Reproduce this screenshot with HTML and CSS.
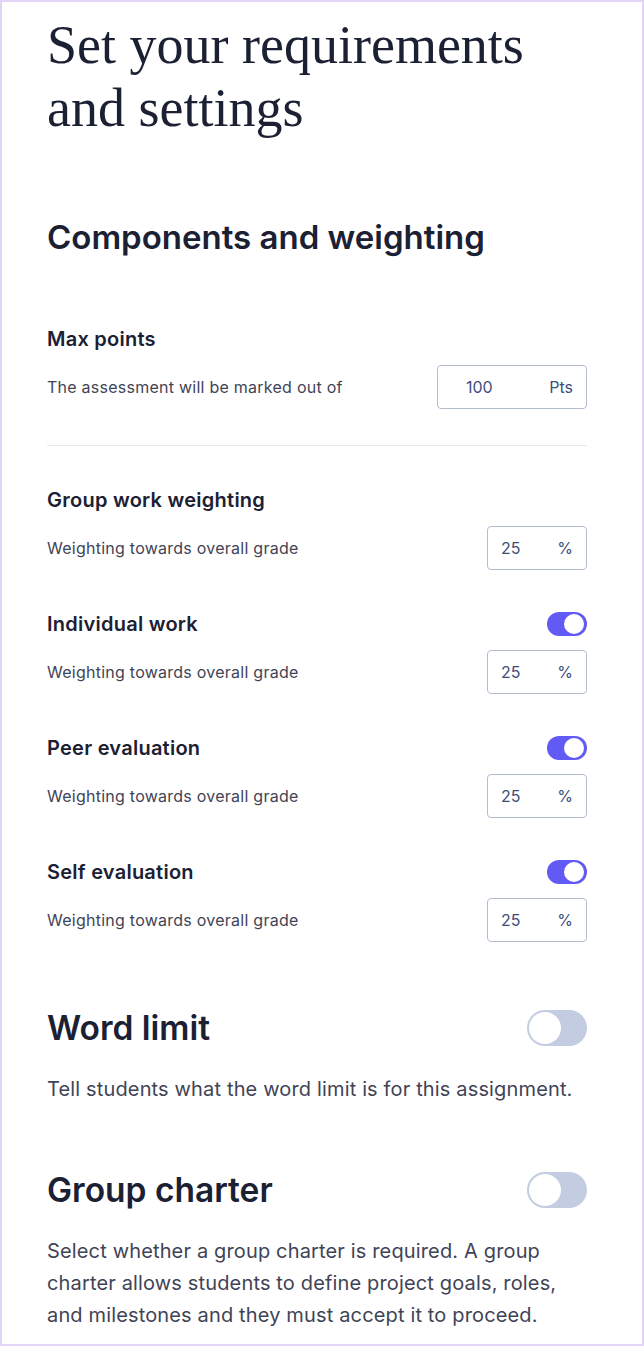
FILE: index.html
```html
<!DOCTYPE html>
<html lang="en">
<head>
    <meta charset="UTF-8">
    <meta name="viewport" content="width=device-width, initial-scale=1.0">
    <title>Requirements and settings</title>
    <link rel="stylesheet" href="styles.css">
</head>
<body>

    <div class="page">
        <h1 class="title">Set your requirements and settings</h1>

        <h2 class="section-title">Components and weighting</h2>

        <div class="field">
            <div class="field-head">
                <h3>Max points</h3>
            </div>
            <div class="field-row">
                <span class="hint">The assessment will be marked out of</span>
                <div class="num-input wide">
                    <span class="value">100</span>
                    <span class="unit">Pts</span>
                </div>
            </div>
        </div>

        <hr class="divider">

        <div class="field">
            <div class="field-head">
                <h3>Group work weighting</h3>
            </div>
            <div class="field-row">
                <span class="hint">Weighting towards overall grade</span>
                <div class="num-input">
                    <span class="value">25</span>
                    <span class="unit">%</span>
                </div>
            </div>
        </div>

        <div class="field">
            <div class="field-head">
                <h3>Individual work</h3>
                <span class="toggle small on"></span>
            </div>
            <div class="field-row">
                <span class="hint">Weighting towards overall grade</span>
                <div class="num-input">
                    <span class="value">25</span>
                    <span class="unit">%</span>
                </div>
            </div>
        </div>

        <div class="field">
            <div class="field-head">
                <h3>Peer evaluation</h3>
                <span class="toggle small on"></span>
            </div>
            <div class="field-row">
                <span class="hint">Weighting towards overall grade</span>
                <div class="num-input">
                    <span class="value">25</span>
                    <span class="unit">%</span>
                </div>
            </div>
        </div>

        <div class="field">
            <div class="field-head">
                <h3>Self evaluation</h3>
                <span class="toggle small on"></span>
            </div>
            <div class="field-row">
                <span class="hint">Weighting towards overall grade</span>
                <div class="num-input">
                    <span class="value">25</span>
                    <span class="unit">%</span>
                </div>
            </div>
        </div>

        <div class="option">
            <div class="option-head">
                <h2>Word limit</h2>
                <span class="toggle"></span>
            </div>
            <p>Tell students what the word limit is for this assignment.</p>
        </div>

        <div class="option">
            <div class="option-head">
                <h2>Group charter</h2>
                <span class="toggle"></span>
            </div>
            <p>Select whether a group charter is required. A group charter allows students to define project goals, roles, and milestones and they must accept it to proceed.</p>
        </div>
    </div>

</body>
</html>
```

FILE: styles.css
```css
* { box-sizing: border-box; }
body {
    margin: 0;
    font-family: Inter, "Liberation Sans", sans-serif;
    color: #1b2033;
    background: white;
}
.page {
    width: 644px;
    min-height: 1346px;
    border: 2px solid #e2d4f6;
    padding: 12px 55px 0 45px;
}
.title {
    font-family: "Liberation Serif", serif;
    font-weight: normal;
    font-size: 54px;
    line-height: 63px;
    margin: 0;
    max-width: 500px;
    color: #1b2033;
}
.section-title {
    font-size: 33px;
    font-weight: 600;
    line-height: 40px;
    margin: 77px 0 0;
}
.field { margin-top: 68px; }
.field + .field { margin-top: 40px; }
.field-head {
    display: flex;
    justify-content: space-between;
    align-items: center;
    height: 28px;
}
.field-head h3 {
    margin: 0;
    font-size: 20px;
    font-weight: 600;
    letter-spacing: 0.25px;
}
.field-row {
    display: flex;
    justify-content: space-between;
    align-items: center;
    margin-top: 12px;
}
.hint {
    font-size: 16px;
    letter-spacing: 0.25px;
    color: #3f4456;
}
.num-input {
    width: 100px;
    height: 44px;
    border: 1px solid #b3bdd0;
    border-radius: 4px;
    display: flex;
    justify-content: space-between;
    align-items: center;
    padding: 0 13px;
    font-size: 16px;
    color: #3c4f7c;
}
.num-input.wide { width: 150px; padding-left: 28px; }
.divider {
    border: none;
    border-top: 1px solid #e6e7ec;
    margin: 36px 0 0;
}
.divider + .field { margin-top: 40px; }
.toggle {
    width: 60px;
    height: 36px;
    border-radius: 18px;
    background: #c3cce0;
    position: relative;
    flex: none;
}
.toggle::after {
    content: "";
    position: absolute;
    left: 2px;
    top: 2px;
    width: 32px;
    height: 32px;
    border-radius: 50%;
    background: white;
}
.toggle.small {
    width: 40px;
    height: 24px;
    border-radius: 12px;
}
.toggle.small::after {
    width: 20px;
    height: 20px;
    top: 2px;
    left: auto;
    right: 3px;
}
.toggle.on { background: #625af5; }
.option { margin-top: 66px; }
.option + .option { margin-top: 65px; }
.option-head {
    display: flex;
    justify-content: space-between;
    align-items: center;
}
.option-head h2 {
    margin: 0;
    font-size: 33.5px;
    font-weight: 600;
    line-height: 40px;
}
.option p {
    margin: 25px 0 0;
    font-size: 20px;
    letter-spacing: 0.15px;
    line-height: 32px;
    color: #3f4456;
}
```
